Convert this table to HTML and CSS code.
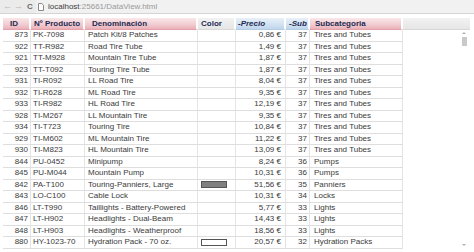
FILE: index.html
```html
<!DOCTYPE html>
<html>
<head>
<meta charset="utf-8">
<link rel="stylesheet" href="styles.css">
</head>
<body>
<div class="toolbar">
  <span class="nav back">&#8592;</span>
  <span class="nav fwd">&#8594;</span>
  <span class="reload">C</span>
  <div class="omni">
    <svg class="page" width="6" height="8" viewBox="0 0 6 8"><path d="M0.5 0.5h3.3l1.7 1.7v5.3h-5z" fill="#fff" stroke="#888" stroke-width="1"/></svg>
    <span class="host">localhost</span><span class="path">:25661/DataView.html</span>
  </div>
</div>
<table class="grid">
  <colgroup>
    <col class="c-id"><col class="c-prod"><col class="c-den"><col class="c-col"><col class="c-pre"><col class="c-sub"><col class="c-cat"><col class="c-fill"><col class="c-scroll">
  </colgroup>
  <thead>
    <tr>
      <th class="pink h-id">ID</th>
      <th class="pink h-prod">Nº Producto</th>
      <th class="pink h-den">Denominación</th>
      <th class="grey h-col">Color</th>
      <th class="blue h-pre">-Precio</th>
      <th class="blue h-sub">-Sub</th>
      <th class="pink h-cat">Subcategoria</th>
      <th class="grey h-fill" colspan="2"></th>
    </tr>
  </thead>
  <tbody>
    <tr><td class="id">873</td><td class="prod">PK-7098</td><td class="den">Patch Kit/8 Patches</td><td class="col"></td><td class="pre">0,86 €</td><td class="sub">37</td><td class="cat">Tires and Tubes</td><td class="fill" rowspan="19"></td><td class="scroll" rowspan="19"><div class="sb"><span class="arr up"></span><span class="thumb"></span><span class="track"></span><span class="arr down"></span></div></td></tr>
    <tr><td class="id">922</td><td class="prod">TT-R982</td><td class="den">Road Tire Tube</td><td class="col"></td><td class="pre">1,49 €</td><td class="sub">37</td><td class="cat">Tires and Tubes</td></tr>
    <tr><td class="id">921</td><td class="prod">TT-M928</td><td class="den">Mountain Tire Tube</td><td class="col"></td><td class="pre">1,87 €</td><td class="sub">37</td><td class="cat">Tires and Tubes</td></tr>
    <tr><td class="id">923</td><td class="prod">TT-T092</td><td class="den">Touring Tire Tube</td><td class="col"></td><td class="pre">1,87 €</td><td class="sub">37</td><td class="cat">Tires and Tubes</td></tr>
    <tr><td class="id">931</td><td class="prod">TI-R092</td><td class="den">LL Road Tire</td><td class="col"></td><td class="pre">8,04 €</td><td class="sub">37</td><td class="cat">Tires and Tubes</td></tr>
    <tr><td class="id">932</td><td class="prod">TI-R628</td><td class="den">ML Road Tire</td><td class="col"></td><td class="pre">9,35 €</td><td class="sub">37</td><td class="cat">Tires and Tubes</td></tr>
    <tr><td class="id">933</td><td class="prod">TI-R982</td><td class="den">HL Road Tire</td><td class="col"></td><td class="pre">12,19 €</td><td class="sub">37</td><td class="cat">Tires and Tubes</td></tr>
    <tr><td class="id">928</td><td class="prod">TI-M267</td><td class="den">LL Mountain Tire</td><td class="col"></td><td class="pre">9,35 €</td><td class="sub">37</td><td class="cat">Tires and Tubes</td></tr>
    <tr><td class="id">934</td><td class="prod">TI-T723</td><td class="den">Touring Tire</td><td class="col"></td><td class="pre">10,84 €</td><td class="sub">37</td><td class="cat">Tires and Tubes</td></tr>
    <tr><td class="id">929</td><td class="prod">TI-M602</td><td class="den">ML Mountain Tire</td><td class="col"></td><td class="pre">11,22 €</td><td class="sub">37</td><td class="cat">Tires and Tubes</td></tr>
    <tr><td class="id">930</td><td class="prod">TI-M823</td><td class="den">HL Mountain Tire</td><td class="col"></td><td class="pre">13,09 €</td><td class="sub">37</td><td class="cat">Tires and Tubes</td></tr>
    <tr><td class="id">844</td><td class="prod">PU-0452</td><td class="den">Minipump</td><td class="col"></td><td class="pre">8,24 €</td><td class="sub">36</td><td class="cat">Pumps</td></tr>
    <tr><td class="id">845</td><td class="prod">PU-M044</td><td class="den">Mountain Pump</td><td class="col"></td><td class="pre">10,31 €</td><td class="sub">36</td><td class="cat">Pumps</td></tr>
    <tr><td class="id">842</td><td class="prod">PA-T100</td><td class="den">Touring-Panniers, Large</td><td class="col"><span class="swatch grey-sw"></span></td><td class="pre">51,56 €</td><td class="sub">35</td><td class="cat">Panniers</td></tr>
    <tr><td class="id">843</td><td class="prod">LO-C100</td><td class="den">Cable Lock</td><td class="col"></td><td class="pre">10,31 €</td><td class="sub">34</td><td class="cat">Locks</td></tr>
    <tr><td class="id">846</td><td class="prod">LT-T990</td><td class="den">Taillights - Battery-Powered</td><td class="col"></td><td class="pre">5,77 €</td><td class="sub">33</td><td class="cat">Lights</td></tr>
    <tr><td class="id">847</td><td class="prod">LT-H902</td><td class="den">Headlights - Dual-Beam</td><td class="col"></td><td class="pre">14,43 €</td><td class="sub">33</td><td class="cat">Lights</td></tr>
    <tr><td class="id">848</td><td class="prod">LT-H903</td><td class="den">Headlights - Weatherproof</td><td class="col"></td><td class="pre">18,56 €</td><td class="sub">33</td><td class="cat">Lights</td></tr>
    <tr><td class="id">880</td><td class="prod">HY-1023-70</td><td class="den">Hydration Pack - 70 oz.</td><td class="col"><span class="swatch white-sw"></span></td><td class="pre">20,57 €</td><td class="sub">32</td><td class="cat">Hydration Packs</td></tr>
  </tbody>
</table>
</body>
</html>
```

FILE: styles.css
```css
html, body {
  margin: 0;
  padding: 0;
  background: #fff;
}
body {
  font-family: "Liberation Sans", Arial, sans-serif;
  font-size: 8px;
  color: #3a3a3a;
  overflow: hidden;
}
.toolbar {
  height: 14px;
  background: #ebebeb;
  border-bottom: 1px solid #d4d4d4;
  display: flex;
  align-items: center;
  padding-left: 3px;
  box-sizing: border-box;
}
.nav {
  color: #b8b8b8;
  font-size: 9px;
  width: 10px;
  line-height: 13px;
}
.fwd { margin-left: 1px; }
.reload {
  color: #6a6a6a;
  font-weight: bold;
  font-size: 8px;
  margin-left: 3px;
  width: 9px;
}
.omni {
  flex: 1;
  display: flex;
  align-items: center;
  height: 13px;
  background: #f1f1f1;
  padding-left: 2px;
}
.page { margin-right: 4px; }
.host { color: #3c3c3c; }
.path { color: #9a9a9a; }

.grid {
  margin: 4px 0 0 3px;
  border-collapse: separate;
  border-spacing: 0;
  table-layout: fixed;
  width: 467px;
}
.c-id { width: 28px; }
.c-prod { width: 54px; }
.c-den { width: 113px; }
.c-col { width: 38px; }
.c-pre { width: 50px; }
.c-sub { width: 24px; }
.c-cat { width: 93px; }
.c-fill { width: 57px; }
.c-scroll { width: 10px; }

th {
  height: 12px;
  padding: 0 0 0 3px;
  box-sizing: border-box;
  text-align: left;
  font-weight: bold;
  color: #1e2b52;
  line-height: 11px;
  border-right: 2px solid #fff;
  white-space: nowrap;
  overflow: hidden;
}
th.pink {
  background: linear-gradient(#f9e8ea, #f0c6cb 70%, #e9b0b8);
  border-bottom: 1px solid #e5a0aa;
}
th.blue {
  background: linear-gradient(#e8f0f8, #cddff0 70%, #bfd5ec);
  border-bottom: 1px solid #b3cce6;
  font-style: italic;
}
th.grey {
  background: linear-gradient(#f2f2f2, #e6e6e6);
  border-bottom: 1px solid #d8d8d8;
}
th.h-id { padding-left: 7px; }
th.h-den { padding-left: 7px; }
th.h-pre { padding-left: 2px; }
th.h-cat { padding-left: 5px; }
th.h-fill { border-right: 0; }

td {
  height: 11.5px;
  padding: 0 3px;
  box-sizing: border-box;
  line-height: 10.5px;
  border-bottom: 1px solid #dedede;
  border-right: 1px solid #e4e4e4;
  white-space: nowrap;
  overflow: hidden;
  vertical-align: middle;
}
td.id { text-align: right; padding-right: 2px; }
td.prod { padding-left: 2px; }
td.den { padding-left: 3px; }
td.pre { text-align: right; padding-right: 4px; }
td.sub { text-align: right; padding-right: 2px; }
td.cat { padding-left: 4px; }
td.fill, td.scroll {
  border: 0;
  padding: 0;
  vertical-align: top;
}
.swatch {
  display: block;
  width: 26px;
  height: 7px;
  box-sizing: border-box;
  border: 1px solid #555;
}
.grey-sw { background: #7f7f7f; }
.white-sw { background: #fff; }

.sb {
  display: flex;
  flex-direction: column;
  align-items: center;
  height: 216px;
  padding-top: 2px;
  box-sizing: border-box;
  width: 8px;
}
.arr {
  width: 0;
  height: 0;
  border-left: 2px solid transparent;
  border-right: 2px solid transparent;
}
.arr.up { border-bottom: 2px solid #b0b0b0; }
.arr.down { border-top: 2px solid #b0b0b0; }
.thumb {
  margin-top: 3px;
  width: 5px;
  height: 9px;
  background: #c9c9c9;
}
.track { flex: 1; }
```
